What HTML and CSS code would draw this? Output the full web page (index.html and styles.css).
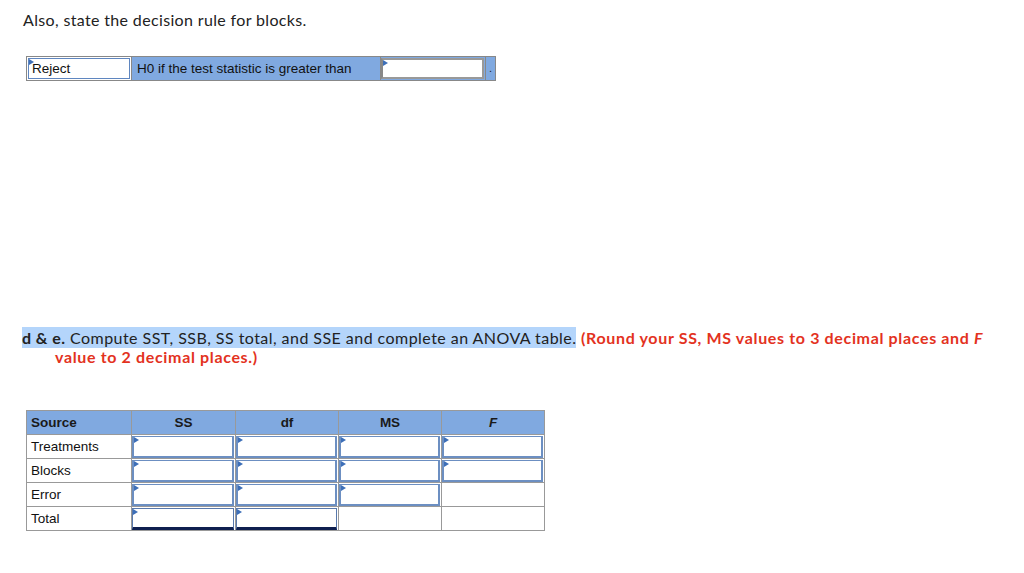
FILE: index.html
```html
<!DOCTYPE html>
<html>
<head>
<meta charset="utf-8">
<link rel="stylesheet" href="styles.css">
</head>
<body>
<div class="page">
  <p class="lead">Also, state the decision rule for blocks.</p>

  <div class="rule">
    <div class="rcell rc-reject"><div class="box arrow">Reject</div></div>
    <div class="rcell rc-text">H0 if the test statistic is greater than</div>
    <div class="rcell rc-input"><div class="box plain arrow"></div></div>
    <div class="rcell rc-dot">.</div>
  </div>

  <div class="question">
    <p class="q1"><span class="hl"><b>d &amp; e.</b> Compute SST, SSB, SS total, and SSE and complete an ANOVA table.</span> <span class="red">(Round your SS, MS values to 3 decimal places and <i>F</i></span></p>
    <p class="q2 red">value to 2 decimal places.)</p>
  </div>

  <table class="anova">
    <colgroup>
      <col class="c1"><col class="c2"><col class="c3"><col class="c4"><col class="c5">
    </colgroup>
    <thead>
      <tr><th class="left">Source</th><th>SS</th><th>df</th><th>MS</th><th><i>F</i></th></tr>
    </thead>
    <tbody>
      <tr><td class="label">Treatments</td><td><div class="inp arrow"></div></td><td><div class="inp arrow"></div></td><td><div class="inp arrow"></div></td><td><div class="inp arrow"></div></td></tr>
      <tr><td class="label">Blocks</td><td><div class="inp arrow"></div></td><td><div class="inp arrow"></div></td><td><div class="inp arrow"></div></td><td><div class="inp arrow"></div></td></tr>
      <tr><td class="label">Error</td><td><div class="inp arrow"></div></td><td><div class="inp arrow"></div></td><td><div class="inp arrow"></div></td><td></td></tr>
      <tr><td class="label">Total</td><td><div class="inp dark arrow"></div></td><td><div class="inp dark arrow"></div></td><td></td><td></td></tr>
    </tbody>
  </table>
</div>
</body>
</html>
```

FILE: styles.css
```css
* { box-sizing: border-box; }
html, body { margin: 0; padding: 0; background: #fff; }
body { font-family: "Lato", "Open Sans", sans-serif; color: #222; }
.page { padding: 10px 0 0 23px; }
.lead { margin: 0; font-size: 16px; line-height: 20px; color: #222; letter-spacing: 0.35px; }

.rule {
  margin-top: 26px;
  margin-left: 3px;
  display: flex;
  width: 470px;
  height: 25px;
  border: 1px solid #888;
}
.rcell { height: 100%; }
.rc-reject { width: 105px; border-right: 1px solid #888; padding: 1px; }
.rc-text {
  width: 249px; background: #80a9e0; border-right: 1px solid #888;
  font-family: "Liberation Sans", Arial, sans-serif; font-size: 13.5px; line-height: 23px; padding-left: 5px; color: #111;
}
.rc-input { width: 105px; background: #80a9e0; border-right: 1px solid #888; padding: 1px 1px 1px 0; }
.rc-dot { flex: 1; background: #80a9e0; font-family: "Liberation Sans", sans-serif; font-size: 11px; line-height: 23px; text-align: center; }
.box {
  height: 100%; background: #fff; border: 1px solid #5f86c0;
  font-family: "Liberation Sans", Arial, sans-serif; font-size: 13.5px; line-height: 19px; padding-left: 3px; color: #111;
  position: relative;
}
.box.plain { border: 2px solid #999; border-left: 2px solid #888; }

.arrow::before {
  content: "";
  position: absolute; left: 0; top: 0;
  border-style: solid; border-width: 3px 0 3px 5px;
  border-color: transparent transparent transparent #3d6fb8;
}

.question { margin-top: 247px; font-size: 16px; line-height: 20px; letter-spacing: 0.45px; }
.question p { margin: 0; }
.q1 { margin-left: -1px !important; }
.hl { background: #b4d5fb; padding: 1px 0; }
.hl b { font-weight: 700; }
.red { color: #e3321e; font-weight: 700; letter-spacing: 0.65px; }
.q2 { padding-left: 32px; margin-top: -1px !important; }

.anova {
  margin-top: 43px; margin-left: 3px;
  border-collapse: collapse;
  font-family: "Liberation Sans", Arial, sans-serif; font-size: 13.5px; color: #111;
  table-layout: fixed;
  width: 518px;
}
.c1 { width: 105px; } .c2 { width: 104px; } .c3 { width: 103px; } .c4 { width: 103px; } .c5 { width: 103px; }
.anova th, .anova td { border: 1px solid #999; height: 24px; padding: 0; }
.anova th { background: #80a9e0; font-weight: 700; text-align: center; color: #1a1a1a; }
.anova th.left { text-align: left; padding-left: 4px; }
.anova td.label { padding-left: 4px; }
.inp {
  position: relative;
  height: 22px; margin: 0 1px 0 0;
  border: 2px solid #6c8fc2; border-top: 1px solid #6c8fc2;
  background: #fff;
}
.inp.dark { border: 1px solid #5979ac; border-bottom: 3px solid #0e1f4f; }
```
